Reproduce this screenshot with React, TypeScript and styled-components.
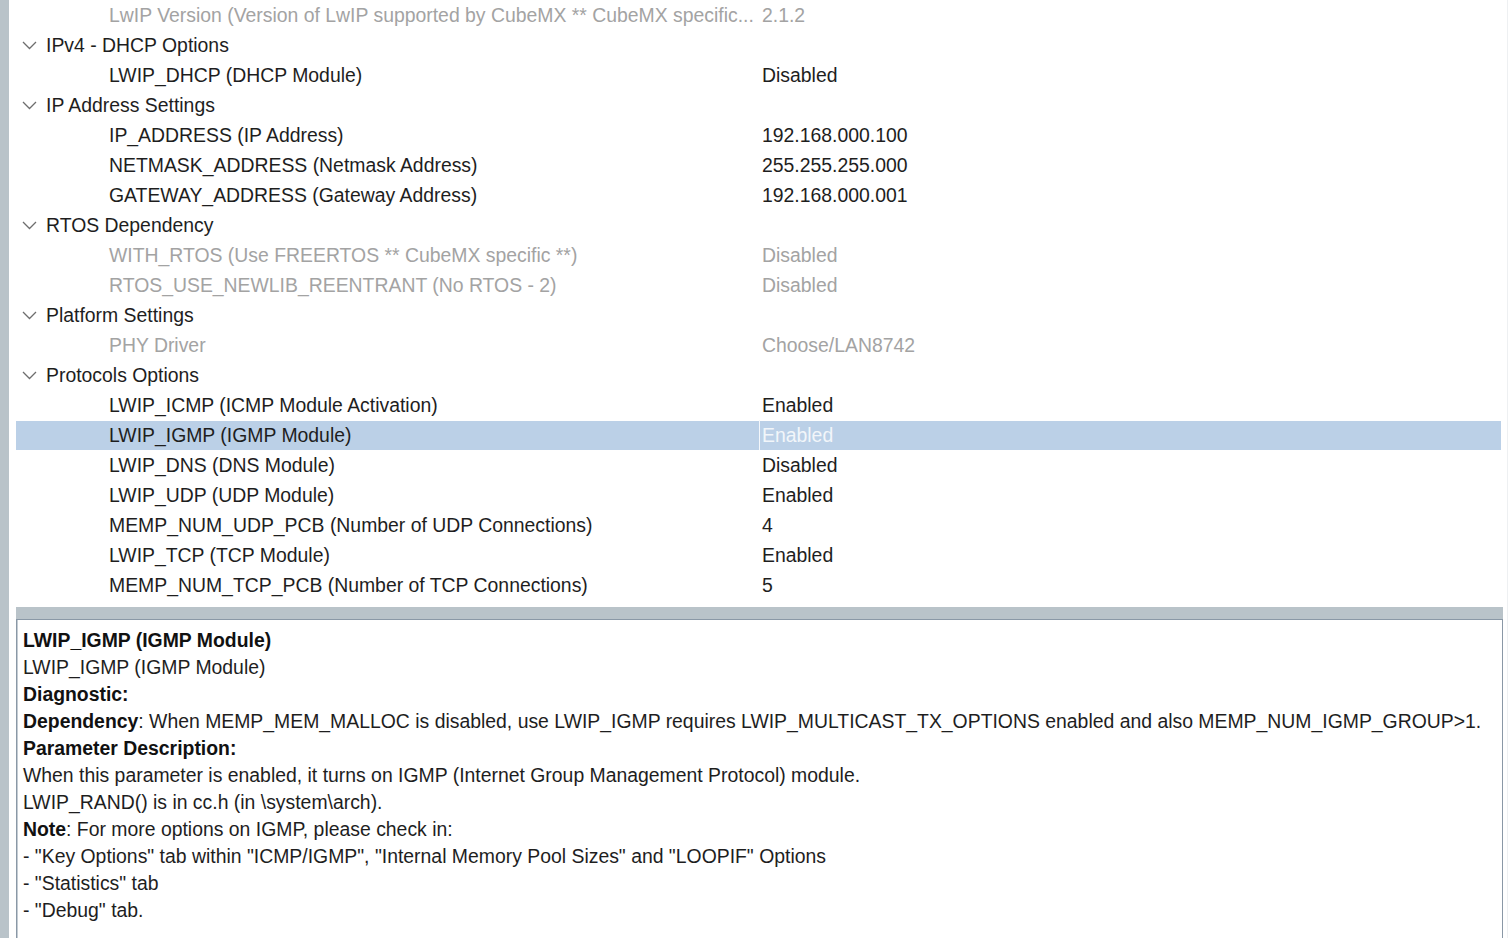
import React from 'react';
import styled, { createGlobalStyle, css } from 'styled-components';

type TreeRow = {
  name: string;
  value?: string;
  group?: boolean;
  muted?: boolean;
  selected?: boolean;
};

const rows: TreeRow[] = [
  { name: 'LwIP Version (Version of LwIP supported by CubeMX ** CubeMX specific...', value: '2.1.2', muted: true },
  { name: 'IPv4 - DHCP Options', group: true },
  { name: 'LWIP_DHCP (DHCP Module)', value: 'Disabled' },
  { name: 'IP Address Settings', group: true },
  { name: 'IP_ADDRESS (IP Address)', value: '192.168.000.100' },
  { name: 'NETMASK_ADDRESS (Netmask Address)', value: '255.255.255.000' },
  { name: 'GATEWAY_ADDRESS (Gateway Address)', value: '192.168.000.001' },
  { name: 'RTOS Dependency', group: true },
  { name: 'WITH_RTOS (Use FREERTOS ** CubeMX specific **)', value: 'Disabled', muted: true },
  { name: 'RTOS_USE_NEWLIB_REENTRANT (No RTOS - 2)', value: 'Disabled', muted: true },
  { name: 'Platform Settings', group: true },
  { name: 'PHY Driver', value: 'Choose/LAN8742', muted: true },
  { name: 'Protocols Options', group: true },
  { name: 'LWIP_ICMP (ICMP Module Activation)', value: 'Enabled' },
  { name: 'LWIP_IGMP (IGMP Module)', value: 'Enabled', selected: true },
  { name: 'LWIP_DNS (DNS Module)', value: 'Disabled' },
  { name: 'LWIP_UDP (UDP Module)', value: 'Enabled' },
  { name: 'MEMP_NUM_UDP_PCB (Number of UDP Connections)', value: '4' },
  { name: 'LWIP_TCP (TCP Module)', value: 'Enabled' },
  { name: 'MEMP_NUM_TCP_PCB (Number of TCP Connections)', value: '5' },
];

const Chevron = () => (
  <svg width="15" height="9" viewBox="0 0 15 9">
    <polyline points="1,1 7.5,7.5 14,1" fill="none" stroke="#6e6e6e" strokeWidth="1.3" />
  </svg>
);

const App: React.FC = () => {
  return (
    <>
      <GlobalStyle />
      <Page>
        <Strip />
        <Main>
          <Tree>
            {rows.map((row) => (
              <Row key={row.name} selected={row.selected}>
                <NameCell group={row.group} muted={row.muted}>
                  {row.group && (
                    <Toggle>
                      <Chevron />
                    </Toggle>
                  )}
                  <span>{row.name}</span>
                </NameCell>
                <ValueCell muted={row.muted} selected={row.selected}>
                  {row.value}
                </ValueCell>
              </Row>
            ))}
          </Tree>
          <Splitter />
          <Description>
            <Line>
              <b>LWIP_IGMP (IGMP Module)</b>
            </Line>
            <Line>LWIP_IGMP (IGMP Module)</Line>
            <Line>
              <b>Diagnostic:</b>
            </Line>
            <Line>
              <b>Dependency</b>: When MEMP_MEM_MALLOC is disabled, use LWIP_IGMP requires
              LWIP_MULTICAST_TX_OPTIONS enabled and also MEMP_NUM_IGMP_GROUP&gt;1.
            </Line>
            <Line>
              <b>Parameter Description:</b>
            </Line>
            <Line>When this parameter is enabled, it turns on IGMP (Internet Group Management Protocol) module.</Line>
            <Line>LWIP_RAND() is in cc.h (in \system\arch).</Line>
            <Line>
              <b>Note</b>: For more options on IGMP, please check in:
            </Line>
            <Line>
              - "Key Options" tab within "ICMP/IGMP", "Internal Memory Pool Sizes" and "LOOPIF" Options
            </Line>
            <Line>- "Statistics" tab</Line>
            <Line>- "Debug" tab.</Line>
          </Description>
        </Main>
      </Page>
    </>
  );
};

const GlobalStyle = createGlobalStyle`
  html, body {
    margin: 0;
    padding: 0;
    background: #ffffff;
  }
  body {
    font-family: "Liberation Sans", Arial, sans-serif;
    font-size: 19.4px;
    color: #1e1e1e;
  }
`;

const Page = styled.div`
  display: flex;
  height: 100vh;
  overflow: hidden;
  border-right: 1px solid #eef0f2;
  box-sizing: border-box;
`;

const Strip = styled.div`
  width: 9px;
  flex: none;
  background: #b9c3c9;
`;

const Main = styled.div`
  width: 1487px;
  margin-left: 7px;
  display: flex;
  flex-direction: column;
`;

const Tree = styled.div`
  display: flex;
  flex-direction: column;
`;

const Row = styled.div<{ selected?: boolean }>`
  display: grid;
  grid-template-columns: 743px 1fr;
  height: 30px;
  align-items: center;
  ${({ selected }) =>
    selected &&
    css`
      background: #bbd0e7;
      box-shadow: inset 0 1px 0 #ffffff;
      margin-right: 2px;
    `}
`;

const NameCell = styled.div<{ group?: boolean; muted?: boolean }>`
  display: flex;
  align-items: center;
  height: 100%;
  padding-top: 1px;
  box-sizing: border-box;
  padding-left: ${({ group }) => (group ? '6px' : '93px')};
  color: ${({ muted }) => (muted ? '#a3a3a3' : '#1e1e1e')};
  white-space: nowrap;
`;

const Toggle = styled.span`
  display: inline-flex;
  width: 24px;
`;

const ValueCell = styled.div<{ muted?: boolean; selected?: boolean }>`
  display: flex;
  align-items: center;
  height: 100%;
  padding-top: 1px;
  box-sizing: border-box;
  padding-left: 3px;
  white-space: nowrap;
  color: ${({ muted }) => (muted ? '#a3a3a3' : '#1e1e1e')};
  ${({ selected }) =>
    selected &&
    css`
      color: #f2f6fa;
      border-left: 1px solid #f4f7fb;
      padding-left: 2px;
    `}
`;

const Splitter = styled.div`
  margin-top: 7px;
  height: 12px;
  background: #b9c3c9;
`;

const Description = styled.div`
  flex: 1;
  border: 1px solid #8a98a6;
  border-bottom: none;
  padding: 7px 6px 0 6px;
  box-shadow: inset 1px 0 0 #c4ccd3;
`;

const Line = styled.div`
  height: 27px;
  line-height: 27px;
  white-space: nowrap;
  b {
    font-weight: bold;
    color: #111111;
  }
`;

export default App;
